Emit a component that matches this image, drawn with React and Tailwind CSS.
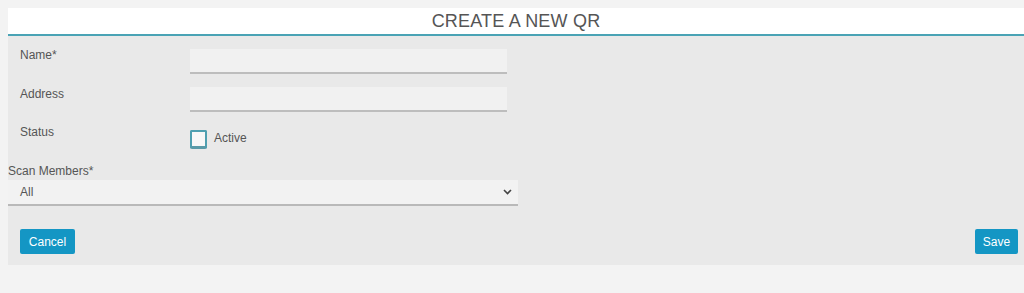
export default function App() {
  return (
    <div className="w-[1024px] h-[293px] bg-[#f3f3f3] pt-[8px] pl-[8px] text-[#555] font-['Liberation_Sans',Arial,sans-serif]">
      <div className="h-[28px] bg-white border-b-2 border-[#4aa3b5] flex items-center justify-center text-[18px] text-[#555] tracking-[0.2px]">
        CREATE A NEW QR
      </div>
      <div className="h-[229px] bg-[#e9e9e9] flex flex-col">
        <div className="flex items-start mt-[13px]">
          <div className="w-[182px] pl-[12px] text-[12px] leading-[14px] mt-[-1px]">Name*</div>
          <div className="w-[317px] h-[25px] bg-[#f1f1f1] border-b-2 border-[#bdbdbd]" />
        </div>
        <div className="flex items-start mt-[13px]">
          <div className="w-[182px] pl-[12px] text-[12px] leading-[14px] mt-[0px]">Address</div>
          <div className="w-[317px] h-[25px] bg-[#f1f1f1] border-b-2 border-[#bdbdbd]" />
        </div>
        <div className="flex items-start mt-[18px]">
          <div className="w-[182px] pl-[12px] text-[12px] leading-[14px] mt-[-5px]">Status</div>
          <div className="flex items-start">
            <div className="w-[17px] h-[19px] rounded-[2px] border-2 border-[#4f9fb0] bg-[#f7f7f7] border-b-[3px] border-b-[#5a9aa8]" />
            <span className="ml-[7px] mt-[1px] text-[12px] leading-[14px]">Active</span>
          </div>
        </div>
        <div className="text-[12px] leading-[14px] mt-[15px]">Scan Members*</div>
        <div className="w-[510px] h-[26px] mt-[2px] bg-[#f2f2f2] border-b-2 border-[#b9b9b9] flex items-center justify-between pl-[12px] pr-[6px] text-[12px]">
          <span>All</span>
          <svg width="9" height="6" viewBox="0 0 9 6"><path d="M1 1l3.5 3.5L8 1" fill="none" stroke="#444" strokeWidth="1.6" /></svg>
        </div>
        <div className="flex justify-between items-start pl-[12px] pr-[6px] mt-[23px]">
          <button className="h-[25px] w-[55px] bg-[#1496c4] text-white text-[12px] rounded-[2px]">Cancel</button>
          <button className="h-[25px] w-[43px] bg-[#1496c4] text-white text-[12px] rounded-[2px]">Save</button>
        </div>
      </div>
    </div>
  );
}
